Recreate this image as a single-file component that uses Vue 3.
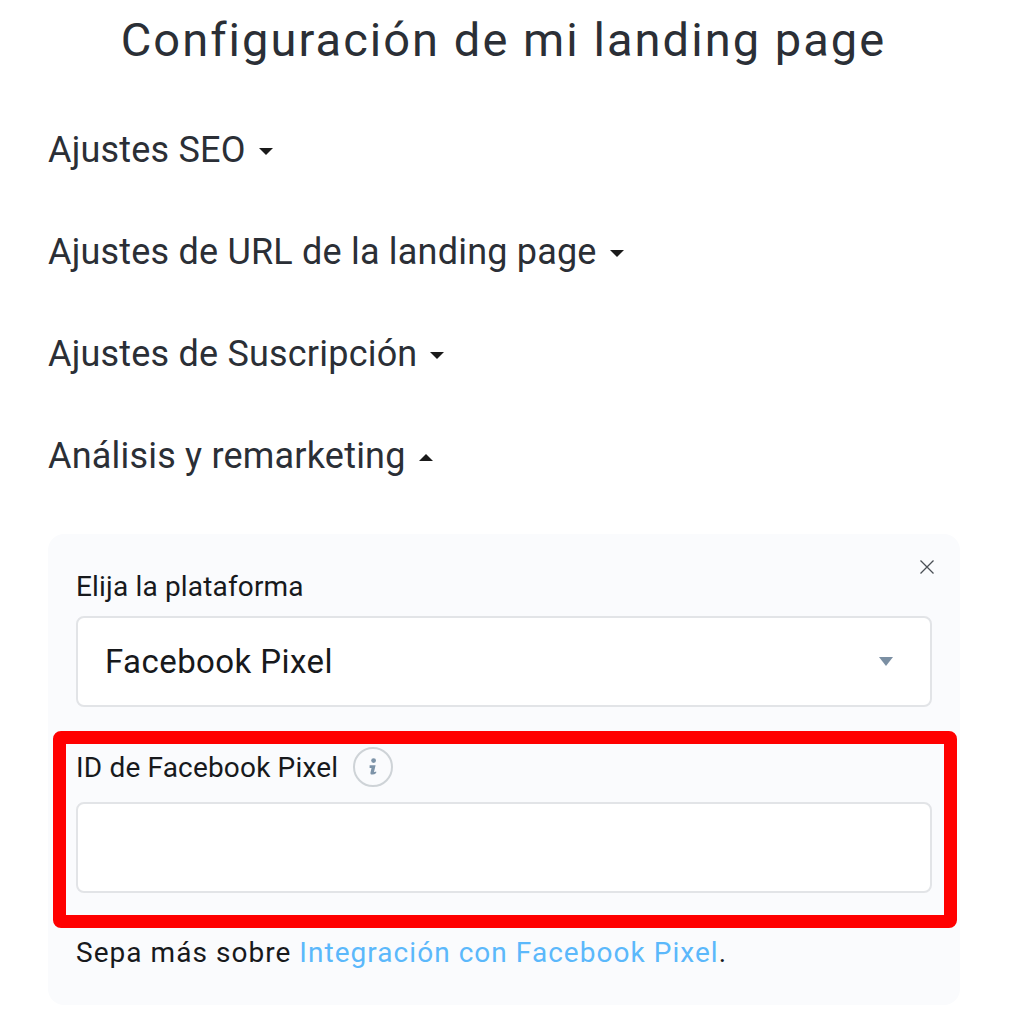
<template>
  <div class="page">
    <h1 class="title">Configuración de mi landing page</h1>
    <div class="sections">
      <div v-for="s in sections" :key="s.name" class="section-head">
        <span>{{ s.name }}</span>
        <span class="caret" :class="{ up: s.open }"></span>
      </div>
    </div>
    <div class="panel">
      <svg class="close" width="16" height="16" viewBox="0 0 16 16">
        <path d="M1.5 1.5L14.5 14.5M14.5 1.5L1.5 14.5" stroke="#4a4f55" stroke-width="1.3" fill="none" />
      </svg>
      <label class="field-label">Elija la plataforma</label>
      <div class="select">
        <span>Facebook Pixel</span>
        <span class="select-caret"></span>
      </div>
      <div class="highlighted">
        <div class="red-box"></div>
        <label class="field-label second">
          ID de Facebook Pixel
          <span class="info">
            <svg width="10" height="18" viewBox="0 0 10 18">
              <circle cx="5.6" cy="2.6" r="2.4" fill="#7d93a8" />
              <path d="M1.6 7.2h6l-1.5 6.2q-.1 .8 .6 .5l1.5-.5v1.6q-1.8 1.6-3.8 1.6-2.4 0-1.9-2.2l1-4.4h-1.9z" fill="#7d93a8" />
            </svg>
          </span>
        </label>
        <div class="input"></div>
      </div>
      <p class="help">Sepa más sobre <a href="#" class="link">Integración con Facebook Pixel</a>.</p>
    </div>
  </div>
</template>

<script setup>
const sections = [
  { name: 'Ajustes SEO', open: false },
  { name: 'Ajustes de URL de la landing page', open: false },
  { name: 'Ajustes de Suscripción', open: false },
  { name: 'Análisis y remarketing', open: true }
]
</script>

<style>
html, body {
  margin: 0;
  background: #fff;
}
</style>

<style scoped>
.page {
  width: 1017px;
  height: 1024px;
  overflow: hidden;
  box-sizing: border-box;
  padding: 0 57px 0 48px;
  font-family: Roboto, "Liberation Sans", sans-serif;
  color: #1f2226;
}

.title {
  margin: 0 -47px 0 -48px;
  padding: 10px 0 0;
  height: 59px;
  line-height: 59px;
  text-align: center;
  font-size: 47px;
  font-weight: 400;
  letter-spacing: 2.05px;
  color: #2b2f36;
}

.sections {
  margin-top: 30px;
}

.section-head {
  display: flex;
  align-items: center;
  height: 102px;
  font-size: 36px;
  letter-spacing: 0.2px;
  color: #2b2f36;
}

.caret {
  margin-left: 13px;
  margin-top: 2px;
  border-left: 7px solid transparent;
  border-right: 7px solid transparent;
  border-top: 7px solid #1a1a1a;
}

.caret.up {
  border-top: 0;
  border-bottom: 7px solid #1a1a1a;
}

.panel {
  position: relative;
  margin-top: 27px;
  height: 471px;
  box-sizing: border-box;
  padding: 34px 28px 0;
  background: #fafbfd;
  border-radius: 16px;
}

.close {
  position: absolute;
  top: 25px;
  right: 25px;
}

.field-label {
  display: flex;
  align-items: center;
  height: 36px;
  font-size: 28px;
  letter-spacing: 0.17px;
  color: #17191c;
}

.select {
  display: flex;
  align-items: center;
  justify-content: space-between;
  box-sizing: border-box;
  height: 91px;
  margin-top: 12px;
  padding: 0 37px 0 27px;
  background: #fff;
  border: 2px solid #e2e4e7;
  border-radius: 8px;
  font-size: 33px;
  letter-spacing: 0.43px;
  color: #17191c;
}

.select-caret {
  border-left: 7.5px solid transparent;
  border-right: 7.5px solid transparent;
  border-top: 9px solid #7b8fa3;
}

.highlighted {
  position: relative;
  padding-top: 42px;
}

.red-box {
  position: absolute;
  top: 24px;
  left: -23px;
  right: -25px;
  height: 197px;
  box-sizing: border-box;
  border: 13px solid #ff0000;
  border-radius: 8px;
}

.second {
  gap: 15px;
}

.info {
  display: flex;
  align-items: center;
  justify-content: center;
  box-sizing: border-box;
  width: 40px;
  height: 40px;
  border: 2px solid #ced3d7;
  border-radius: 50%;
}

.input {
  box-sizing: border-box;
  height: 91px;
  margin-top: 17px;
  background: #fff;
  border: 2px solid #e2e4e7;
  border-radius: 8px;
}

.help {
  margin: 42px 0 0;
  font-size: 28px;
  line-height: 36px;
  letter-spacing: 1.04px;
  color: #17191c;
}

.link {
  color: #5bb8fb;
  text-decoration: none;
}
</style>
